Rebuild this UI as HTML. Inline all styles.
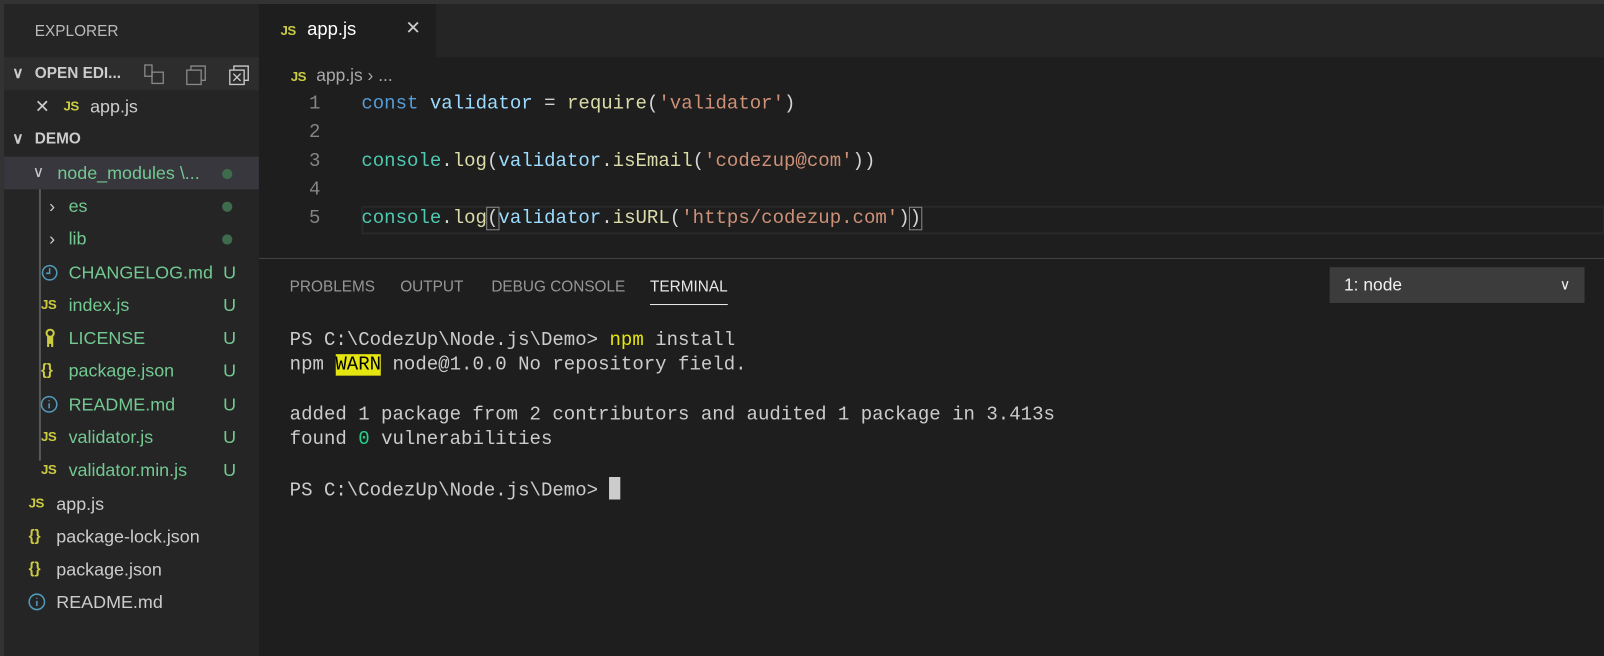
<!DOCTYPE html>
<html><head><meta charset="utf-8"><style>
*{margin:0;padding:0;box-sizing:border-box}
body{width:1604px;height:641px;background:#333;position:relative;overflow:hidden;font-family:"Liberation Sans",sans-serif}
.wrap{position:absolute;left:0;top:0;width:1567px;height:627px;transform:scale(1.0236);transform-origin:0 0}
.side{position:absolute;left:4px;top:4px;width:249px;height:637px;background:#252526;color:#ccc}
.main{position:absolute;left:253px;top:4px;width:1351px;height:637px;background:#1e1e1e}
.a{position:absolute;white-space:nowrap}
.row{position:absolute;left:0;width:249px;height:32px;font-size:17.5px;line-height:32px;white-space:nowrap}
.js{color:#cbcb41;font-weight:bold;font-size:13px;letter-spacing:-0.5px}
.br{color:#cbcb41;font-weight:bold;font-size:15px}
.g{color:#73c991}
.u{position:absolute;left:214px;color:#73c991}
.dot{position:absolute;left:213px;top:12px;width:10px;height:10px;border-radius:50%;background:#3f6b4d}
.mono{font-family:"Liberation Mono",monospace;font-size:18.6px}
.code{position:absolute;left:100px;height:28px;line-height:28px}
.ln{position:absolute;left:20px;width:40px;text-align:right;color:#858585}
.k{color:#569cd6}.v{color:#9cdcfe}.f{color:#dcdcaa}.s{color:#ce9178}.c{color:#4ec9b0}.p{color:#d4d4d4}
.t{position:absolute;left:30px;color:#ccc;line-height:24px;white-space:pre}
.tab{position:absolute;top:268px;font-size:15px;color:#969696}
</style></head><body>
<div class="wrap">
<div class="side">
 <div class="a" style="left:30px;top:18px;font-size:15px;color:#bbb">EXPLORER</div>
 <div class="row" style="top:52px;background:#2d2d2e;font-weight:bold;font-size:15px">
  <span class="a" style="left:8px;top:0;font-size:15px">&#8744;</span>
  <span class="a" style="left:30px;color:#ccc">OPEN EDI...</span>
  <svg class="a" style="left:136px;top:6px" width="22" height="22" viewBox="0 0 22 22" fill="none" stroke="#888" stroke-width="1.3"><rect x="1.5" y="1.5" width="7" height="11"/><rect x="8.5" y="8.5" width="11" height="11"/></svg>
  <svg class="a" style="left:177px;top:6px" width="22" height="22" viewBox="0 0 22 22" fill="none" stroke="#888" stroke-width="1.3"><rect x="1.5" y="6.5" width="14" height="14"/><path d="M5.5 6.5V2.5H19.5V16.5H15.5"/></svg>
  <svg class="a" style="left:219px;top:6px" width="22" height="22" viewBox="0 0 22 22" fill="none" stroke="#ccc" stroke-width="1.3"><rect x="1.5" y="6.5" width="14" height="14"/><path d="M5.5 6.5V2.5H19.5V16.5H15.5M5 10l7 7M12 10l-7 7"/></svg>
 </div>
 <div class="row" style="top:84px"><span class="a" style="left:30px;color:#ccc">✕</span><span class="a js" style="left:58px">JS</span><span class="a" style="left:84px">app.js</span></div>
 <div class="row" style="top:116px;font-weight:bold;font-size:15px"><span class="a" style="left:8px">&#8744;</span><span class="a" style="left:30px">DEMO</span></div>
 <div class="row" style="top:149px;background:#37373d"><span class="a" style="left:28px;font-size:15px">&#8744;</span><span class="a g" style="left:52px">node_modules \...</span><span class="dot"></span></div>
 <div class="a" style="left:34px;top:181px;width:2px;height:265px;background:#585858"></div>
 <div class="row" style="top:181px"><span class="a" style="left:44px">&#8250;</span><span class="a g" style="left:63px">es</span><span class="dot"></span></div>
 <div class="row" style="top:213px"><span class="a" style="left:44px">&#8250;</span><span class="a g" style="left:63px">lib</span><span class="dot"></span></div>
 <div class="row" style="top:246px"><svg class="a" style="left:36px;top:8px" width="17" height="17" viewBox="0 0 17 17" fill="none" stroke="#519aba" stroke-width="1.5"><circle cx="8.5" cy="8.5" r="7"/><path d="M8.5 4v5H5"/></svg><span class="a g" style="left:63px">CHANGELOG.md</span><span class="u">U</span></div>
 <div class="row" style="top:278px"><span class="a js" style="left:36px">JS</span><span class="a g" style="left:63px">index.js</span><span class="u">U</span></div>
 <div class="row" style="top:310px"><svg class="a" style="left:38px;top:7px" width="14" height="19" viewBox="0 0 14 19" fill="#cbcb41"><circle cx="7" cy="4.5" r="3.5" fill="none" stroke="#cbcb41" stroke-width="2"/><path d="M4 8h6v10H8v-3H6v3H4z"/></svg><span class="a g" style="left:63px">LICENSE</span><span class="u">U</span></div>
 <div class="row" style="top:342px"><span class="a br" style="left:36px">{}</span><span class="a g" style="left:63px">package.json</span><span class="u">U</span></div>
 <div class="row" style="top:375px"><svg class="a" style="left:35px;top:7px" width="18" height="18" viewBox="0 0 18 18" fill="none" stroke="#519aba" stroke-width="1.5"><circle cx="9" cy="9" r="7.5"/><path d="M9 8v5M9 5v1"/></svg><span class="a g" style="left:63px">README.md</span><span class="u">U</span></div>
 <div class="row" style="top:407px"><span class="a js" style="left:36px">JS</span><span class="a g" style="left:63px">validator.js</span><span class="u">U</span></div>
 <div class="row" style="top:439px"><span class="a js" style="left:36px">JS</span><span class="a g" style="left:63px">validator.min.js</span><span class="u">U</span></div>
 <div class="row" style="top:472px"><span class="a js" style="left:24px">JS</span><span class="a" style="left:51px">app.js</span></div>
 <div class="row" style="top:504px"><span class="a br" style="left:24px">{}</span><span class="a" style="left:51px">package-lock.json</span></div>
 <div class="row" style="top:536px"><span class="a br" style="left:24px">{}</span><span class="a" style="left:51px">package.json</span></div>
 <div class="row" style="top:568px"><svg class="a" style="left:23px;top:7px" width="18" height="18" viewBox="0 0 18 18" fill="none" stroke="#519aba" stroke-width="1.5"><circle cx="9" cy="9" r="7.5"/><path d="M9 8v5M9 5v1"/></svg><span class="a" style="left:51px">README.md</span></div>
</div>
<div class="main">
 <div class="a" style="left:0;top:0;width:1351px;height:52px;background:#252526"></div>
 <div class="a" style="left:0;top:0;width:173px;height:52px;background:#1e1e1e"></div>
 <span class="a js" style="left:21px;top:18px">JS</span>
 <span class="a" style="left:47px;top:14px;font-size:18px;color:#fff">app.js</span>
 <span class="a" style="left:143px;top:13px;font-size:18px;color:#ccc">✕</span>
 <span class="a js" style="left:31px;top:63px">JS</span>
 <span class="a" style="left:56px;top:60px;font-size:17px;color:#aaa">app.js &#8250; ...</span>
 <div class="a" style="left:100px;top:197px;width:1215px;height:28px;border:2px solid #282828"></div>
 <div class="mono">
  <div class="ln code" style="top:84px;left:20px">1</div>
  <div class="code" style="top:84px"><span class="k">const</span> <span class="v">validator</span> <span class="p">=</span> <span class="f">require</span><span class="p">(</span><span class="s">'validator'</span><span class="p">)</span></div>
  <div class="ln code" style="top:112px;left:20px">2</div>
  <div class="ln code" style="top:140px;left:20px">3</div>
  <div class="code" style="top:140px"><span class="c">console</span><span class="p">.</span><span class="f">log</span><span class="p">(</span><span class="v">validator</span><span class="p">.</span><span class="f">isEmail</span><span class="p">(</span><span class="s">'codezup@com'</span><span class="p">))</span></div>
  <div class="ln code" style="top:168px;left:20px">4</div>
  <div class="ln code" style="top:196px;left:20px">5</div>
  <div class="code" style="top:196px"><span class="c">console</span><span class="p">.</span><span class="f">log</span><span class="p" style="outline:1px solid #888">(</span><span class="v">validator</span><span class="p">.</span><span class="f">isURL</span><span class="p">(</span><span class="s">'https/codezup.com'</span><span class="p">)</span><span class="p" style="outline:1px solid #888">)</span></div>
 </div>
 <div class="a" style="left:0;top:248px;width:1351px;height:1px;background:#444"></div>
 <span class="tab" style="left:30px">PROBLEMS</span>
 <span class="tab" style="left:138px">OUTPUT</span>
 <span class="tab" style="left:227px">DEBUG CONSOLE</span>
 <span class="tab" style="left:382px;color:#e7e7e7">TERMINAL</span>
 <div class="a" style="left:382px;top:293px;width:76px;height:1px;background:#e7e7e7"></div>
 <div class="a" style="left:1046px;top:257px;width:249px;height:35px;background:#3c3c3c;color:#f0f0f0;font-size:17px;line-height:35px;padding-left:14px">1: node<span class="a" style="right:14px;top:0;font-size:14px">&#8744;</span></div>
 <div class="mono">
  <div class="t" style="top:317px">PS C:\CodezUp\Node.js\Demo> <span style="color:#e5e510">npm</span> install</div>
  <div class="t" style="top:341px">npm <span style="background:#e5e510;color:#000">WARN</span> node@1.0.0 No repository field.</div>
  <div class="t" style="top:390px">added 1 package from 2 contributors and audited 1 package in 3.413s</div>
  <div class="t" style="top:414px">found <span style="color:#23d18b">0</span> vulnerabilities</div>
  <div class="t" style="top:462px">PS C:\CodezUp\Node.js\Demo> <span style="display:inline-block;width:11px;height:22px;background:#ccc;vertical-align:-4px"></span></div>
 </div>
</div>
</div>
</body></html>
